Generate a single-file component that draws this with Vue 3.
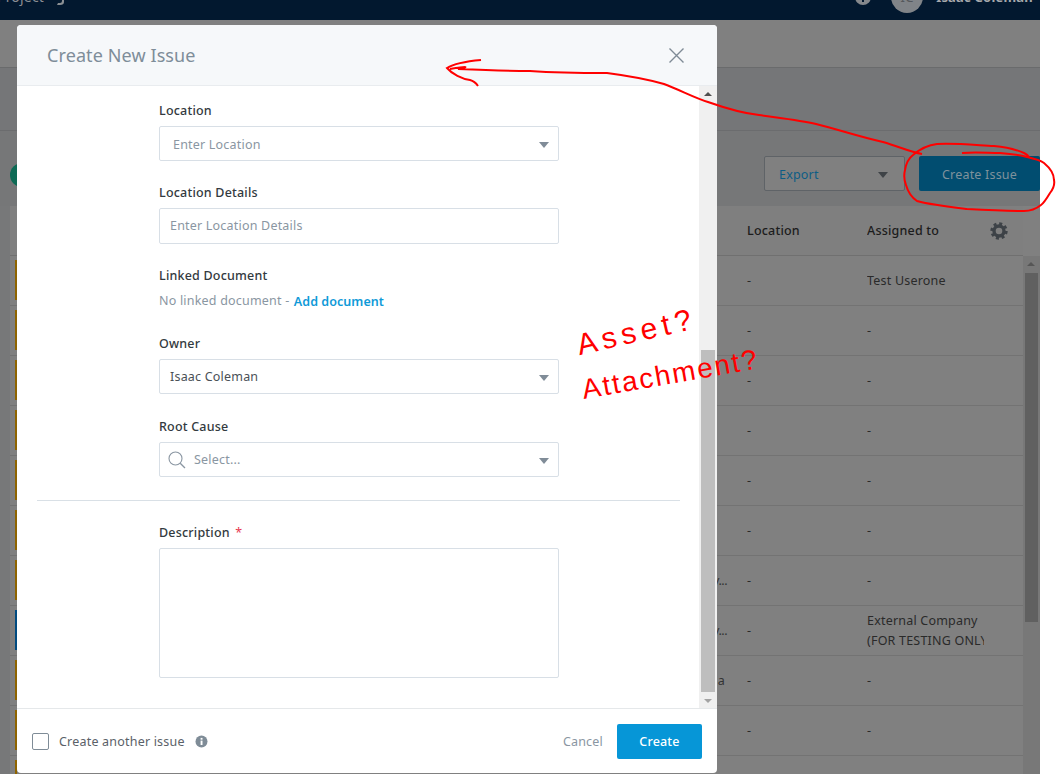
<script setup>
const rows = [
  { title: '', assigned: ['Test Userone'], stripe: 'amber' },
  { title: '', assigned: ['-'], stripe: 'amber' },
  { title: '', assigned: ['-'], stripe: 'amber' },
  { title: '', assigned: ['-'], stripe: 'amber' },
  { title: '', assigned: ['-'], stripe: 'amber' },
  { title: '', assigned: ['-'], stripe: 'amber' },
  { title: 'y...', assigned: ['-'], stripe: 'amber' },
  { title: 'y...', assigned: ['External Company', '(FOR TESTING ONLY)'], stripe: 'blue' },
  { title: 'a\u00a0', assigned: ['-'], stripe: 'amber' },
  { title: '', assigned: ['-'], stripe: 'amber' },
  { title: '', assigned: ['-'], stripe: 'amber' }
]
</script>

<template>
  <div class="screen">
    <div class="page">
      <header class="topbar">
        <div class="brand">
          <span class="project">Project</span>
          <svg class="logo" width="10" height="6" viewBox="0 0 10 6"><path d="M1 0h8v3q0 3-4 3H2l1-2h2q2 0 2-2V0z" fill="#8b8f93"/></svg>
        </div>
        <div class="user">
          <svg class="help" width="16" height="16" viewBox="0 0 16 16"><circle cx="8" cy="8" r="8" fill="#85888c"/><rect x="7" y="9" width="2" height="4" fill="#02182f"/></svg>
          <span class="avatar">IC</span>
          <span class="username">Isaac Coleman</span>
        </div>
      </header>
      <div class="subnav"></div>
      <div class="band"></div>
      <div class="toolbar">
        <span class="status-dot"></span>
        <div class="actions">
          <div class="export"><span>Export</span><i class="caret dark"></i></div>
          <div class="create-issue">Create Issue</div>
        </div>
      </div>
      <div class="table-wrap">
        <div class="table">
          <div class="row head">
            <span class="title-cell"></span>
            <span class="loc">Location</span>
            <span class="assigned">Assigned to</span>
            <svg class="gear" width="18" height="18" viewBox="0 0 18 18">
              <circle cx="9" cy="9" r="5" fill="none" stroke="#3d4247" stroke-width="3.4"/>
              <circle cx="9" cy="9" r="7.4" fill="none" stroke="#3d4247" stroke-width="2.6" stroke-dasharray="3 2.81"/>
            </svg>
          </div>
          <div v-for="(r, i) in rows" :key="i" class="row">
            <i class="stripe" :class="r.stripe"></i>
            <span class="title-cell">{{ r.title }}</span>
            <span class="loc">-</span>
            <span class="assigned">
              <span v-for="line in r.assigned" :key="line" class="line">{{ line }}</span>
            </span>
          </div>
        </div>
        <div class="table-scroll">
          <i class="arrow-up"></i>
          <div class="table-thumb"></div>
        </div>
      </div>
    </div>

    <section class="modal">
      <div class="modal-head">
        <h2>Create New Issue</h2>
        <svg width="17" height="17" viewBox="0 0 17 17"><path d="M1.5 1.5l14 14M15.5 1.5l-14 14" stroke="#7f8b96" stroke-width="1.4" fill="none"/></svg>
      </div>
      <div class="modal-body">
        <div class="form-scroll">
          <div class="form">
            <label>Location</label>
            <div class="input h35 pad-wide"><span class="ph">Enter Location</span><i class="caret"></i></div>
            <label>Location Details</label>
            <div class="input h36"><span class="ph">Enter Location Details</span></div>
            <label>Linked Document</label>
            <div class="linked"><span class="ph">No linked document -</span> <a>Add document</a></div>
            <label>Owner</label>
            <div class="input h35 owner"><span class="val">Isaac Coleman</span><i class="caret"></i></div>
            <label>Root Cause</label>
            <div class="input h35 search">
              <svg width="18" height="18" viewBox="0 0 18 18"><circle cx="7.5" cy="7.5" r="6.5" fill="none" stroke="#8a96a2" stroke-width="1.1"/><path d="M12.2 12.2l4.8 4.8" stroke="#8a96a2" stroke-width="1.3"/></svg>
              <span class="ph">Select...</span><i class="caret"></i>
            </div>
          </div>
          <hr />
          <div class="form second">
            <label>Description <b>*</b></label>
            <div class="textarea"></div>
          </div>
        </div>
        <div class="form-bar">
          <i class="arrow-up"></i>
          <div class="form-thumb"></div>
          <i class="arrow-down"></i>
        </div>
      </div>
      <div class="modal-foot">
        <span class="check"></span>
        <span class="another">Create another issue</span>
        <svg width="13" height="13" viewBox="0 0 13 13"><circle cx="6.5" cy="6.5" r="6" fill="#7f8c97"/><rect x="5.6" y="5.6" width="1.9" height="4.4" fill="#fff"/><rect x="5.6" y="2.9" width="1.9" height="1.8" fill="#fff"/></svg>
        <span class="spacer"></span>
        <span class="cancel">Cancel</span>
        <button class="create">Create</button>
      </div>
    </section>

    <svg class="ink" width="1057" height="774" viewBox="0 0 1057 774">
      <path d="M481 60C470 61 455 63 447 68C452 74 462 79 470 80C474 81 476 83 478 86M450 69C470 66 468 67 458 69C480 70 510 71 530 71C560 73 590 73 607 73C630 76 650 80 664 84C680 90 695 98 708 102C725 108 740 113 759 115C780 118 800 120 816 124C840 130 860 137 883 142C900 147 910 152 922 154" />
      <path d="M962 153C975 152 988 153 1000 153C1012 154 1020 155 1027 157C1036 159 1040 160 1044 163C1050 168 1054 174 1054 180C1055 185 1054 188 1050 193C1047 198 1044 203 1041 205C1036 209 1031 211 1024 211C1005 211 985 210 967 209C950 207 932 205 917 201C911 197 908 192 906 185C904 180 904 174 905 170C906 164 909 158 913 155C920 149 928 145 937 144C955 143 975 145 994 146C1005 147 1015 149 1024 153C1026 154 1028 155 1029 157" />
    </svg>
    <span class="note asset">Asset?</span>
    <span class="note attach">Attachment?</span>
  </div>
</template>

<style>
html, body { margin: 0; background: #fff; }
</style>

<style scoped>
.screen {
  position: relative;
  width: 1057px;
  height: 774px;
  overflow: hidden;
  background: #fff;
  font-family: "Noto Sans", "Open Sans", sans-serif;
  font-size: 12.5px;
  letter-spacing: .2px;
}
.page {
  width: 1040px;
  height: 774px;
  display: flex;
  flex-direction: column;
  background: #777879;
  overflow: hidden;
}
.topbar {
  height: 20px;
  flex: none;
  background: #02182f;
  display: flex;
  justify-content: space-between;
  overflow: hidden;
}
.brand { display: flex; align-items: flex-start; margin-left: -3px; }
.project { color: #8b8f93; font-size: 14px; line-height: 14px; margin-top: -10px; width: 58px; }
.logo { margin-top: -1px; }
.user { display: flex; align-items: flex-start; padding-right: 7px; }
.help { margin-top: -11px; margin-right: 20px; }
.avatar {
  width: 32px; height: 32px; margin-top: -19px; margin-right: 13px;
  border-radius: 50%; background: #808488; color: #54585c;
  display: flex; align-items: center; justify-content: center; font-size: 13px;
}
.username { color: #a6a9ac; font-weight: 700; font-size: 13px; line-height: 14px; margin-top: -10px; }

.subnav { height: 47px; flex: none; background: #808080; border-bottom: 1px solid #6a6b6c; }
.band { height: 62px; flex: none; background: #757678; border-bottom: 1px solid #6b6c6e; }
.toolbar {
  height: 75px; flex: none;
  background: #767778;
  position: relative;
  display: flex; justify-content: flex-end;
}
.status-dot { position: absolute; left: 10px; top: 32px; width: 24px; height: 24px; border-radius: 50%; background: #0e6a55; }
.actions { display: flex; gap: 14px; margin-top: 25px; height: 35px; }
.export {
  width: 141px; box-sizing: border-box; border: 1px solid #5f6367; border-radius: 2px;
  background: #808080; color: #0e5d85; display: flex; align-items: center;
  justify-content: space-between; padding: 2px 16px 0 14px;
}
.create-issue {
  width: 121px; padding-top: 2px; box-sizing: border-box; background: #014d70; color: #7f929c; border-radius: 2px;
  display: flex; align-items: center; justify-content: center;
}
.table-wrap { flex: 1; display: flex; margin-left: 10px; background: #808080; min-height: 0; }
.table { flex: 1; min-width: 0; }
.row {
  position: relative;
  height: 50px; box-sizing: border-box; border-bottom: 1px solid #737373;
  display: flex; align-items: center; color: #2a2a2a;
}
.row.head { background: #7f7f7f; color: #1c1c1c; font-weight: 500; border-bottom-color: #707070; }
.stripe { position: absolute; left: 5px; top: 4px; width: 2px; height: 40px; }
.stripe.amber { background: #8f6400; }
.stripe.blue { background: #014b80; }
.title-cell { width: 717px; flex: none; text-align: right; letter-spacing: -.5px; white-space: nowrap; color: #333; }
.loc { width: 120px; flex: none; margin-left: 20px; }
.assigned { width: 117px; flex: none; overflow: hidden; white-space: nowrap; display: flex; flex-direction: column; gap: 3px; }
.line { line-height: 17px; }
.gear { margin-left: 6px; }
.table-scroll { width: 17px; flex: none; background: #787878; position: relative; margin-top: 50px; }
.table-scroll .arrow-up { position: absolute; left: 4px; top: 6px; border-bottom-color: #565656; }
.table-thumb { position: absolute; left: 2px; right: 2px; top: 17px; height: 349px; background: #606060; }

.modal {
  position: absolute; left: 17px; top: 25px; width: 700px; height: 748px;
  background: #fff; border-radius: 4px; overflow: hidden;
  display: flex; flex-direction: column;
}
.modal-head {
  height: 61px; flex: none; box-sizing: border-box;
  background: #f6f8fa; border-bottom: 1px solid #e9ecef;
  display: flex; align-items: center; justify-content: space-between;
  padding: 0 32px 0 30px;
}
.modal-head h2 { margin: 0; font-weight: 400; font-size: 18px; letter-spacing: .1px; color: #7e8d99; }
.modal-body { flex: 1; display: flex; min-height: 0; }
.form-scroll { flex: 1; min-width: 0; overflow: hidden; padding-top: 16px; }
.form { margin-left: 142px; width: 400px; display: flex; flex-direction: column; }
label { display: block; height: 16px; line-height: 18px; color: #333a40; font-weight: 500; margin-bottom: 8px; }
label b { color: #e8384f; font-weight: 400; margin-left: 2px; }
.input {
  box-sizing: border-box; border: 1px solid #d8dfe6; border-radius: 2px;
  display: flex; align-items: center; padding: 0 10px; margin-bottom: 23px;
  position: relative;
}
.h35 { height: 35px; }
.h36 { height: 36px; padding-bottom: 1px; }
.pad-wide { padding-left: 13px; padding-top: 1px; }
.owner { margin-bottom: 24px; }
.ph { color: #8a96a2; }
.val { color: #4a5056; }
.caret {
  position: absolute; right: 9px; top: 15px;
  width: 0; height: 0; border-left: 5.5px solid transparent; border-right: 5.5px solid transparent;
  border-top: 6px solid #808c98;
}
.caret.dark { position: static; border-top-color: #3f4347; }
.linked { height: 18px; line-height: 18px; margin-top: 1px; margin-bottom: 25px; }
.linked a { color: #0f9ad8; font-weight: 600; letter-spacing: .05px; margin-left: 1px; line-height: 20px; vertical-align: -1px; }
.search { padding-left: 8px; padding-bottom: 1px; }
.search svg { margin-right: 8px; flex: none; margin-top: 1px; }
hr { border: 0; border-top: 1px solid #d9e0e6; margin: 0 19px 0 20px; }
.second { margin-top: 23px; }
.textarea { height: 130px; box-sizing: border-box; border: 1px solid #d8dfe6; border-radius: 2px; }
.form-bar { width: 18px; flex: none; background: #f0f0f0; position: relative; }
.arrow-up, .arrow-down {
  position: absolute; left: 5px; width: 0; height: 0;
  border-left: 4px solid transparent; border-right: 4px solid transparent;
}
.arrow-up { top: 6px; border-bottom: 4px solid #505050; }
.arrow-down { bottom: 5px; border-top: 4px solid #a3a3a3; }
.form-thumb { position: absolute; left: 2px; right: 2px; top: 264px; height: 342px; background: #bebebe; }
.modal-foot {
  height: 65px; flex: none; box-sizing: border-box; border-top: 1px solid #e5e8ea;
  display: flex; align-items: center; padding: 0 15px;
}
.check { width: 17px; height: 17px; box-sizing: border-box; border: 1px solid #7f8c97; border-radius: 2px; margin-right: 10px; margin-top: 1px; }
.another { color: #5a6168; margin-right: 10px; }
.spacer { flex: 1; }
.cancel { color: #8a96a2; margin-right: 14px; }
.create {
  width: 85px; height: 35px; border: 0; border-radius: 2px; background: #0696d7;
  color: #fff; font: 500 12.5px "Noto Sans", sans-serif; letter-spacing: .2px;
}
.ink { position: absolute; left: 0; top: 0; pointer-events: none; }
.ink path { fill: none; stroke: #f00; stroke-width: 2; }
.note {
  position: absolute; color: #f00; font-family: "Liberation Sans", sans-serif;
  white-space: nowrap; transform-origin: left bottom;
}
.asset { left: 581px; top: 328px; font-size: 30px; letter-spacing: 5px; transform: rotate(-13deg); }
.attach { left: 585px; top: 374px; font-size: 28px; letter-spacing: 2px; transform: rotate(-10deg); }
</style>
